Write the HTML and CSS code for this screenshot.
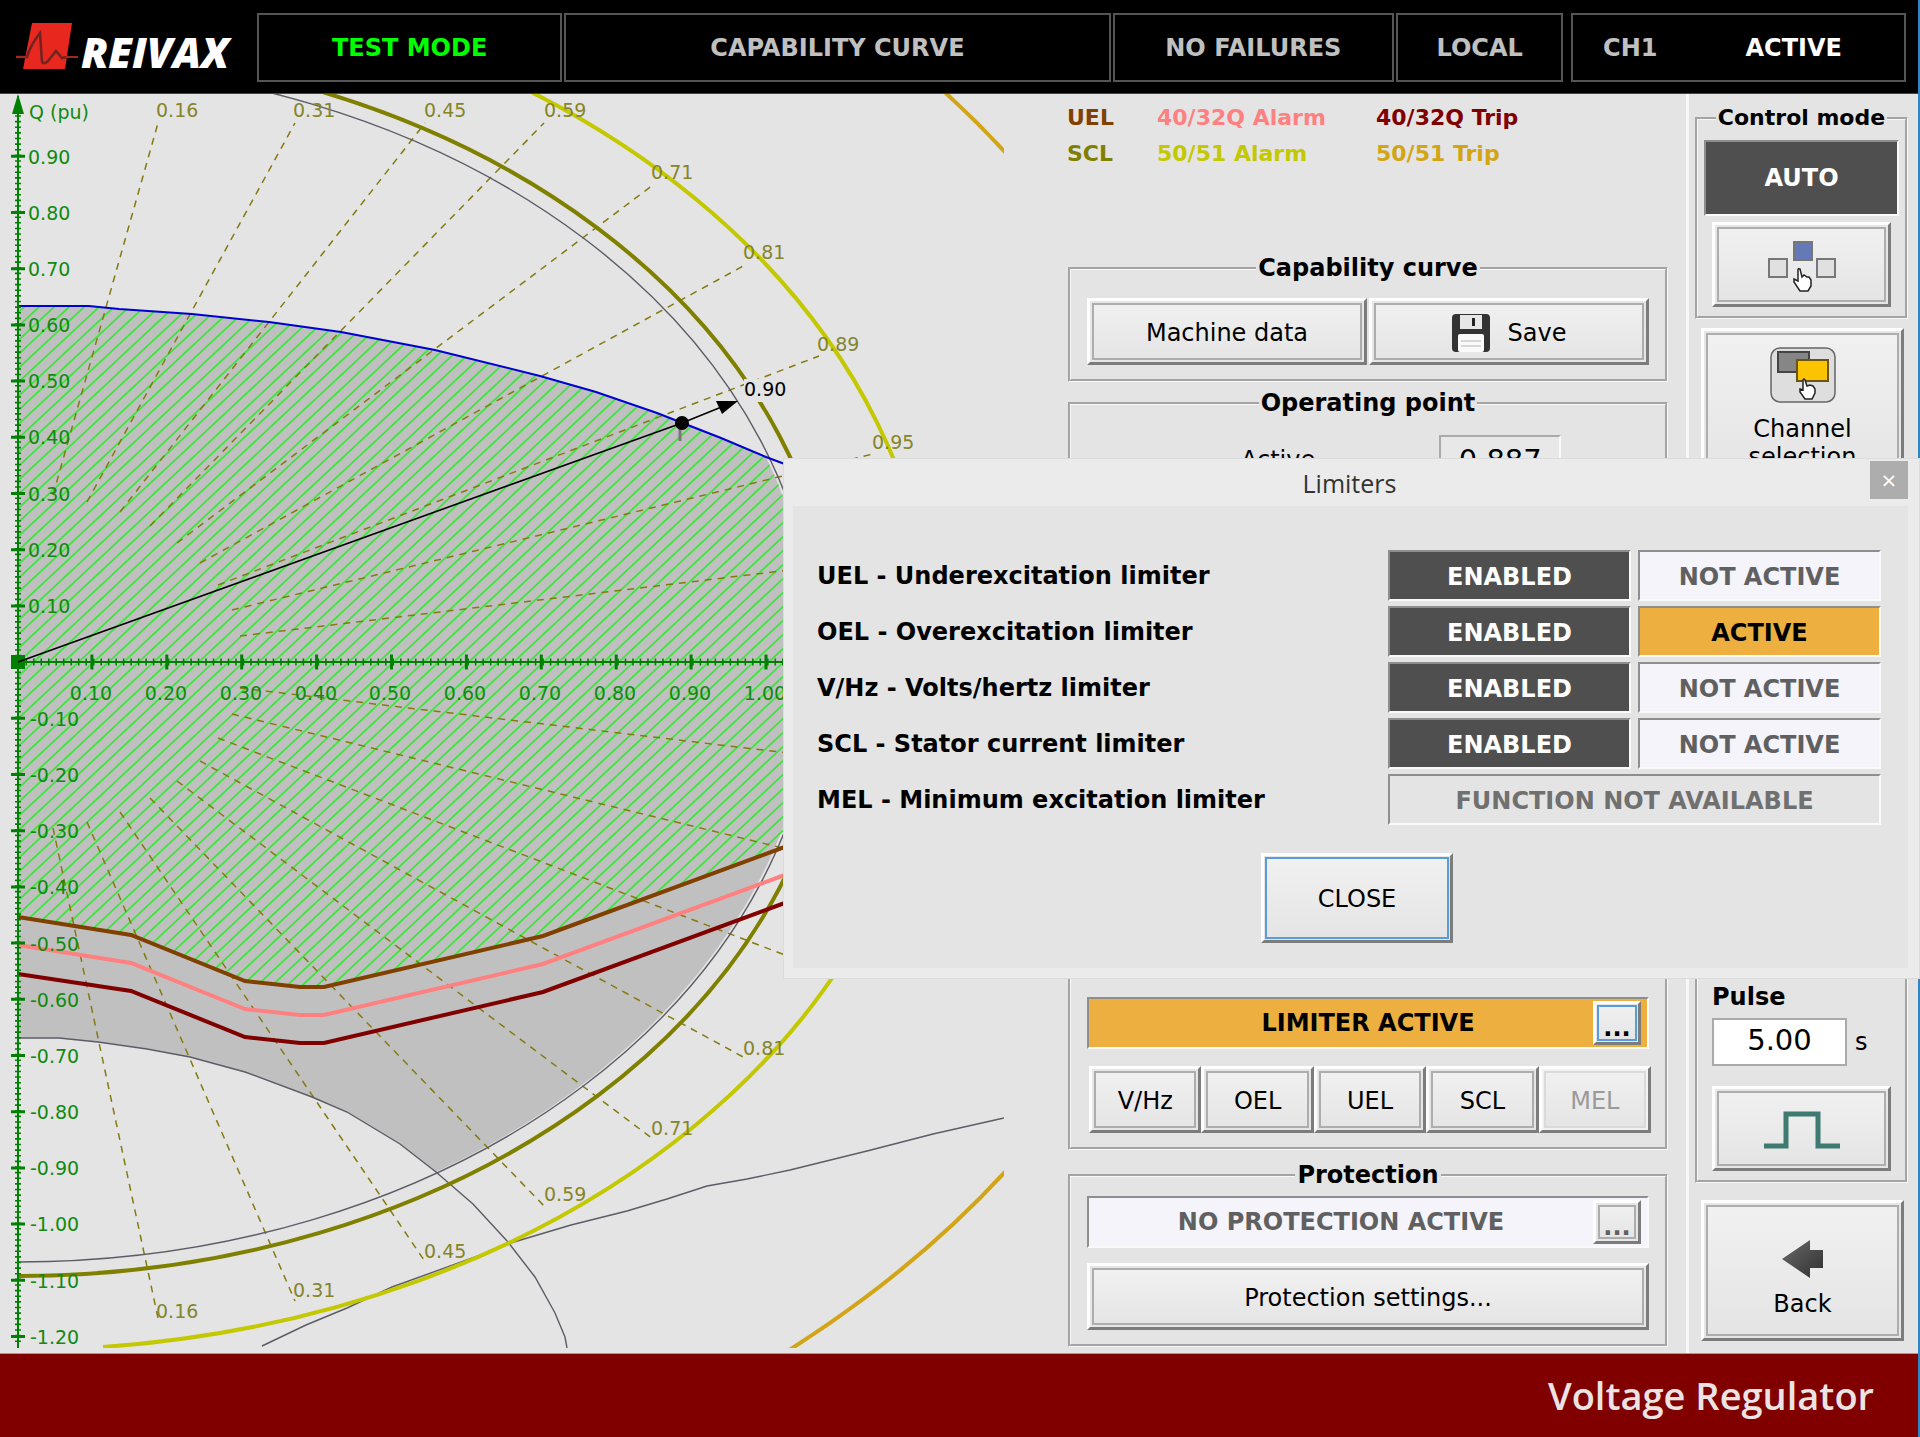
FILE: index.html
```html
<!DOCTYPE html>
<html lang="en">
<head>
<meta charset="utf-8">
<title>Voltage Regulator - Capability curve</title>
<link rel="stylesheet" href="styles.css">
</head>
<body>
<div class="app">
  <header class="topbar">
    <svg class="logo" viewBox="0 0 240 94" role="img" aria-label="REIVAX">
      <path d="M32 23H72L65 69H23Z" fill="#e8281e"/>
      <path d="M16 57H27Q31 44 40 33L42 62Q44 65 48 61L56 51L62 58L66 57" fill="none" stroke="#6e2420" stroke-width="2.5"/>
      <path d="M16 57H26M66 57H78" stroke="#a02820" stroke-width="2"/>
      <text x="81" y="68" class="logo-text">REIVAX</text>
    </svg>
    <div class="cell cell-mode">TEST MODE</div>
    <div class="cell cell-title">CAPABILITY CURVE</div>
    <div class="cell cell-fail">NO FAILURES</div>
    <div class="cell cell-place">LOCAL</div>
    <div class="cell cell-channel"><span>CH1</span><span class="on">ACTIVE</span></div>
  </header>

  <main class="main">
    <svg class="chart" viewBox="0 94 1064 1259" preserveAspectRatio="xMinYMin meet">
      <defs>
        <clipPath id="plot"><rect x="0" y="94" width="1004" height="1254"/></clipPath>
        <pattern id="hatch" x="8" y="0" width="15" height="14" patternUnits="userSpaceOnUse">
          <path d="M-3 16.8L18 -2.8M-3 2.8L3 -2.8M12 16.8L18 11.2" stroke="#3fe43f" stroke-width="1.8"/>
        </pattern>
      </defs>
      <g clip-path="url(#plot)">
        <path fill="#c0c0c0" d="M18 306L89 306L119 309L192 314L269 322L341 332L435 350L540 376L596 392L657 413L721 438L766 457A799 600 0 0 1 436 1172L400 1144L347 1112L312 1097L245 1072L190 1057L147 1049L98 1042L59 1038H18Z"/>
        <path fill="url(#hatch)" d="M18 306L89 306L119 309L192 314L269 322L341 332L435 350L540 376L596 392L657 413L721 438L766 457A799 600 0 0 1 775 852L543 936L315 988L245 981L131 935L18 917Z"/>
        <g class="ray">
          <path d="M53 495L158 123M87 502L295 123M120 512L425 123M150 526L544 123M177 543L653 185M200 563L745 265M218 585L819 356M232 610L873 454M240 636L906 556"/>
          <path d="M53 828L158 1318M87 822L295 1301M120 812L426 1263M150 798L546 1208M177 781L653 1139M200 761L745 1058M218 738L819 968M232 714L873 870M240 688L906 767"/>
        </g>
        <g class="thin">
          <ellipse cx="18" cy="662" rx="799" ry="600"/>
          <path d="M18 1038L59 1038L98 1042L147 1049L190 1057L245 1072L312 1097L347 1112L400 1144L436 1172L473 1204L508 1242L535 1277L555 1313L565 1337L567 1348"/>
          <path d="M262 1346L306 1325L347 1308L392 1287L486 1253L514 1242L571 1225L627 1211L667 1199L707 1186L747 1179L790 1170L867 1151L933 1134L1004 1118"/>
        </g>
        <path class="blue" d="M18 306L89 306L119 309L192 314L269 322L341 332L435 350L540 376L596 392L657 413L721 438L766 457L790 466"/>
        <g class="thick">
          <ellipse cx="18" cy="662" rx="819" ry="614" stroke="#808000"/>
          <path d="M103 1347A917 688 0 0 0 103 -23" stroke="#c3c800"/>
          <ellipse cx="18" cy="662" rx="1198" ry="899" stroke="#d2a516"/>
          <path stroke="#804000" d="M18 917L131 935L245 981L300 987L324 987L543 936L790 845"/>
          <path stroke="#ff8080" d="M18 945L131 963L245 1009L300 1015L324 1015L543 964L790 873"/>
          <path stroke="#800000" d="M18 974L131 991L245 1037L300 1043L324 1043L543 992L790 901"/>
        </g>
      </g>
      <rect x="0" y="94" width="17" height="1254" fill="#e4e4e4"/>
      <g stroke="#008000" fill="#008000">
        <path d="M18 96V1348M18 662H800" stroke-width="2"/>
        <path d="M18 1342V110" stroke-width="6" stroke-dasharray="1.6 4.02"/>
        <path d="M18 662H800" stroke-width="7" stroke-dasharray="1.6 5.89"/>
        <path d="M18 1338V110" stroke-width="14" stroke-dasharray="3 53.2"/>
        <path d="M90.4 662H800" stroke-width="15" stroke-dasharray="3 71.9"/>
        <path d="M18 94L24 114H12Z" stroke="none"/>
        <rect x="11" y="655" width="14" height="14" stroke="none"/>
      </g>
      <g class="axis">
        <text x="29" y="119">Q (pu)</text>
        <text x="28" y="164">0.90</text><text x="28" y="220">0.80</text><text x="28" y="276">0.70</text>
        <text x="28" y="332">0.60</text><text x="28" y="388">0.50</text><text x="28" y="444">0.40</text>
        <text x="28" y="501">0.30</text><text x="28" y="557">0.20</text><text x="28" y="613">0.10</text>
        <text x="30" y="726">-0.10</text><text x="30" y="782">-0.20</text><text x="30" y="838">-0.30</text>
        <text x="30" y="894">-0.40</text><text x="30" y="951">-0.50</text><text x="30" y="1007">-0.60</text>
        <text x="30" y="1063">-0.70</text><text x="30" y="1119">-0.80</text><text x="30" y="1175">-0.90</text>
        <text x="30" y="1231">-1.00</text><text x="30" y="1288">-1.10</text><text x="30" y="1344">-1.20</text>
        <g text-anchor="middle">
          <text x="91" y="700">0.10</text><text x="166" y="700">0.20</text><text x="241" y="700">0.30</text>
          <text x="316" y="700">0.40</text><text x="390" y="700">0.50</text><text x="465" y="700">0.60</text>
          <text x="540" y="700">0.70</text><text x="615" y="700">0.80</text><text x="690" y="700">0.90</text>
          <text x="765" y="700">1.00</text>
        </g>
      </g>
      <g class="pf">
        <text x="156" y="117">0.16</text><text x="293" y="117">0.31</text><text x="424" y="117">0.45</text>
        <text x="544" y="117">0.59</text><text x="651" y="179">0.71</text><text x="743" y="259">0.81</text>
        <text x="817" y="351">0.89</text><text x="872" y="449">0.95</text>
        <text x="156" y="1318">0.16</text><text x="293" y="1297">0.31</text><text x="424" y="1258">0.45</text>
        <text x="544" y="1201">0.59</text><text x="651" y="1135">0.71</text><text x="743" y="1055">0.81</text>
      </g>
      <path d="M680 425V441" stroke="#777" stroke-width="3"/>
      <path d="M18 662L682 423L724 406" fill="none" stroke="#000" stroke-width="1.6"/>
      <path d="M716 401H738L722 414Z"/>
      <circle cx="682" cy="423" r="7"/>
      <rect x="744" y="379" width="44" height="23" fill="#e4e4e4"/>
      <text x="744" y="396" class="point">0.90</text>
    </svg>

    <section class="panel">
      <div class="key">
        <span class="uel">UEL</span><span class="alarm-q">40/32Q Alarm</span><span class="trip-q">40/32Q Trip</span>
        <span class="scl">SCL</span><span class="alarm-i">50/51 Alarm</span><span class="trip-i">50/51 Trip</span>
      </div>
      <fieldset class="group group-curve">
        <legend>Capability curve</legend>
        <div class="pair">
          <button type="button" class="btn">Machine data</button>
          <button type="button" class="btn">
            <svg width="38" height="38" viewBox="0 0 38 38" aria-hidden="true">
              <rect x="0" y="0" width="38" height="38" rx="4" fill="#333"/>
              <rect x="8" y="1" width="22" height="14" fill="#e6e6e6"/>
              <rect x="20" y="4" width="3" height="8" fill="#222"/>
              <rect x="6" y="20" width="26" height="18" rx="2" fill="#fafafa"/>
              <path d="M9 27H29M9 32H29" stroke="#ccc" stroke-width="1.5"/>
            </svg>
            <span>Save</span>
          </button>
        </div>
      </fieldset>
      <fieldset class="group group-point">
        <legend>Operating point</legend>
        <div class="reading"><label for="active">Active</label><input id="active" value="0.887" readonly></div>
      </fieldset>
      <fieldset class="group group-limiters">
        <legend>Limiters</legend>
        <div class="status warn"><span>LIMITER ACTIVE</span><button type="button" class="btn more focus">...</button></div>
        <div class="row">
          <button type="button" class="btn">V/Hz</button>
          <button type="button" class="btn">OEL</button>
          <button type="button" class="btn">UEL</button>
          <button type="button" class="btn">SCL</button>
          <button type="button" class="btn" disabled>MEL</button>
        </div>
      </fieldset>
      <fieldset class="group group-protection">
        <legend>Protection</legend>
        <div class="status idle"><span>NO PROTECTION ACTIVE</span><button type="button" class="btn more">...</button></div>
        <button type="button" class="btn wide">Protection settings...</button>
      </fieldset>
    </section>

    <aside class="side">
      <fieldset class="group group-control">
        <legend>Control mode</legend>
        <div class="state dark">AUTO</div>
        <button type="button" class="btn side-btn" aria-label="Select control mode">
          <svg width="70" height="52" viewBox="0 0 70 52" aria-hidden="true">
            <g stroke="#777" stroke-width="2">
              <rect x="2" y="19" width="18" height="18" fill="#e0e0e0"/>
              <rect x="27" y="2" width="18" height="18" fill="#6379b8"/>
              <rect x="50" y="19" width="18" height="18" fill="#e0e0e0"/>
            </g>
            <path d="M31 30Q31 28 33 29L35 37L37 35L40 37L42 37L44 40V46L41 51H33L27 42V39L31 41Z" fill="#fff" stroke="#222" stroke-width="1.5"/>
          </svg>
        </button>
      </fieldset>
      <button type="button" class="btn stack channel">
        <svg width="66" height="56" viewBox="0 0 66 56" aria-hidden="true">
          <rect x="1" y="1" width="64" height="54" rx="9" fill="#dedede" stroke="#666" stroke-width="1.5"/>
          <rect x="8" y="5" width="31" height="20" fill="#868686" stroke="#444" stroke-width="2"/>
          <rect x="27" y="13" width="31" height="21" fill="#fcc400" stroke="#6a5510" stroke-width="2"/>
          <path d="M33 33Q34 31 35 33L37 39L40 38L43 39L45 42V46L42 52H35L30 45V42L33 43Z" fill="#fff" stroke="#222" stroke-width="1.5"/>
        </svg>
        <span>Channel selection</span>
      </button>
      <fieldset class="group group-pulse">
        <label class="pulse-label" for="pulse">Pulse</label>
        <div class="pulse-row"><input id="pulse" value="5.00"><span>s</span></div>
        <button type="button" class="btn side-btn" aria-label="Send pulse">
          <svg width="76" height="40" viewBox="0 0 76 40" aria-hidden="true">
            <path d="M0 36H22V4H54V36H76" fill="none" stroke="#3f7a70" stroke-width="5"/>
          </svg>
        </button>
      </fieldset>
      <button type="button" class="btn stack back">
        <svg width="42" height="38" viewBox="0 0 42 38" aria-hidden="true">
          <defs><linearGradient id="ink" x1="0" y1="0" x2="1" y2="1"><stop offset="0" stop-color="#6a6a6a"/><stop offset="1" stop-color="#303030"/></linearGradient></defs>
          <path d="M0 19L28 0V10H41V28H28V38Z" fill="url(#ink)"/>
        </svg>
        <span>Back</span>
      </button>
    </aside>
  </main>

  <footer class="footer">Voltage Regulator</footer>

  <section class="dialog" role="dialog" aria-labelledby="dialog-title">
    <div class="dialog-bar">
      <h2 id="dialog-title">Limiters</h2>
      <button type="button" class="x" aria-label="Close window">×</button>
    </div>
    <div class="dialog-body">
      <table class="limits">
        <tr><th scope="row">UEL - Underexcitation limiter</th><td class="dark">ENABLED</td><td class="idle">NOT ACTIVE</td></tr>
        <tr><th scope="row">OEL - Overexcitation limiter</th><td class="dark">ENABLED</td><td class="warn">ACTIVE</td></tr>
        <tr><th scope="row">V/Hz - Volts/hertz limiter</th><td class="dark">ENABLED</td><td class="idle">NOT ACTIVE</td></tr>
        <tr><th scope="row">SCL - Stator current limiter</th><td class="dark">ENABLED</td><td class="idle">NOT ACTIVE</td></tr>
        <tr><th scope="row">MEL - Minimum excitation limiter</th><td class="none" colspan="2">FUNCTION NOT AVAILABLE</td></tr>
      </table>
      <button type="button" class="btn focus close">CLOSE</button>
    </div>
  </section>
</div>
</body>
</html>
```
FILE: styles.css
```css
* { box-sizing: border-box; }
body {
  margin: 0;
  background: #e4e4e4;
  color: #000;
  font: 24px/28px "DejaVu Sans", Verdana, sans-serif;
}
.app {
  position: relative;
  display: flex;
  flex-direction: column;
  min-height: 100vh;
  border-right: 2px solid #2f86c4;
}
button, input { font: inherit; color: inherit; }

/* top bar */
.topbar {
  display: flex;
  gap: 2px;
  height: 94px;
  padding: 13px 12px 11px 0;
  background: #000;
  border-bottom: 1px solid #444;
  font-weight: bold;
  color: #c0c0c0;
}
.logo { flex: none; width: 240px; height: 94px; margin: -13px 15px 0 0; }
.logo-text { font: italic 800 42px "Open Sans", sans-serif; fill: #fff; }
.cell {
  display: flex;
  align-items: center;
  justify-content: center;
  border: 2px solid #555;
  white-space: nowrap;
}
.cell-mode { flex: 305 1 0; color: #00ff00; }
.cell-title { flex: 549 1 0; }
.cell-fail { flex: 281 1 0; }
.cell-place { flex: 165 1 0; margin-right: 6px; }
.cell-channel { flex: 335 1 0; gap: 88px; }
.on { margin-right: 32px; color: #fff; }

/* main area */
.main {
  flex: 1;
  display: grid;
  grid-template-columns: minmax(0, 1fr) 622px 232px;
}
.chart { display: block; width: 100%; }
.ray { fill: none; stroke: #857a10; stroke-width: 1.5; stroke-dasharray: 7 6; }
.thin { fill: none; stroke: #5c5c66; stroke-width: 1.4; }
.thick { fill: none; stroke-width: 4; }
.blue { fill: none; stroke: #0000d0; stroke-width: 2; }
.axis, .pf, .point { font-size: 19px; }
.axis { fill: #108a10; }
.pf { fill: #85852a; }

.panel {
  display: flex;
  flex-direction: column;
  gap: 7px;
  padding: 6px 18px 6px 4px;
}
.key {
  display: grid;
  grid-template-columns: 90px 219px auto;
  margin: 0 0 75px -1px;
  font-size: 22px;
  line-height: 36px;
  font-weight: bold;
}
.uel { color: #804000; }
.alarm-q { color: #ff8080; }
.trip-q { color: #800000; }
.scl { color: #808000; }
.alarm-i { color: #c3c800; }
.trip-i { color: #d2a516; }

.group {
  min-width: 0;
  margin: 0;
  padding: 16px 16px 14px;
  border: 3px groove #f8f8f8;
}
.group legend {
  margin: 0 auto;
  padding: 0 2px;
  font-weight: bold;
}
.btn {
  display: flex;
  align-items: center;
  justify-content: center;
  gap: 18px;
  height: 67px;
  margin: 0;
  padding: 2px 0 0;
  border: 3px solid;
  border-color: #fdfdfd #7c7c7c #7c7c7c #fdfdfd;
  border-radius: 0;
  background: linear-gradient(#f1f1f1, #e4e4e4);
  box-shadow: inset 0 0 0 2px #e6e6e6, inset 0 0 0 4px #adadad;
}
.btn:disabled { color: #9a9a9a; box-shadow: inset 0 0 0 2px #f2f2f2, inset 0 0 0 4px #dadada; }
.btn.focus { box-shadow: inset 0 0 0 1px #e6e6e6, inset 0 0 0 3px #5a9be0; }
.pair, .row { display: flex; }
.pair { gap: 2px; }
.row { margin: 0 -2px 0 2px; }
.pair .btn, .row .btn { flex: 1 1 0; }
.group-point { flex: 1; padding-top: 18px; }
.reading { display: flex; gap: 124px; padding-left: 154px; align-items: center; }
.reading input {
  width: 122px;
  height: 50px;
  padding: 0;
  border: 2px solid;
  border-color: #aaa #fafafa #fafafa #aaa;
  background: #e8e8e8;
  font-size: 29px;
  text-align: center;
}
.group-limiters { padding-top: 30px; }
.group-protection { margin-top: 4px; padding-top: 7px; }
.status {
  display: grid;
  grid-template-columns: 1fr 48px;
  align-items: center;
  height: 52px;
  padding-right: 6px;
  margin-bottom: 15px;
  font-weight: bold;
  text-align: center;
}
.group-limiters .status { padding-left: 54px; margin-bottom: 17px; }
.btn.more { height: 44px; padding-top: 10px; }
.wide { width: 100%; }
.status, .state, .limits td {
  border: 2px solid;
  border-color: #8e8e8e #fafafa #fafafa #8e8e8e;
}
.dark { background: #4f4f4f; color: #fff; }
.warn { background: #edaf3f; }
.idle { background: #f4f4fa; color: #606060; }
.none { color: #707070; }

/* right-hand column */
.side {
  display: flex;
  flex-direction: column;
  padding: 10px 10px 12px 6px;
  border-left: 3px solid #f8f8f8;
}
.side .group { padding: 8px 6px 9px; }
.side legend { font-size: 22px; }
.state {
  display: flex;
  align-items: center;
  justify-content: center;
  height: 76px;
  margin-bottom: 6px;
  font-weight: bold;
}
.side-btn { width: calc(100% - 16px); height: 85px; margin: 0 8px; }
.stack { flex-direction: column; margin: 0 4px 0 6px; gap: 12px; }
.channel { height: 160px; margin-top: 9px; }
.side .group-pulse { margin-top: auto; padding-top: 40px; }
.pulse-label { display: block; margin: 0 8px 7px; font-weight: bold; }
.pulse-row { display: flex; align-items: center; gap: 8px; margin: 0 8px 20px; }
.pulse-row input {
  width: 135px;
  height: 48px;
  padding: 0 0 4px;
  border: 2px solid #aaa;
  background: #fff;
  font-size: 29px;
  text-align: center;
}
.back { height: 141px; margin-top: 17px; padding-top: 16px; }

.footer {
  height: 84px;
  padding: 0 44px;
  background: #800000;
  border-top: 1px solid #c09080;
  color: #ece4e4;
  font: 600 38px/82px "Open Sans", sans-serif;
  text-align: right;
}

/* dialog over the page */
.dialog {
  position: absolute;
  top: 458px;
  right: -2px;
  width: 1137px;
  padding: 0 11px 10px 9px;
  background: #ebebeb;
  border: 1px solid #dcdcdc;
}
.dialog-bar {
  display: grid;
  grid-template-columns: 1fr 38px;
  align-items: center;
  height: 47px;
}
.dialog-bar h2 {
  margin: 0 0 0 36px;
  font: 25px/32px "Open Sans", sans-serif;
  color: #333;
  text-align: center;
}
.x {
  height: 38px;
  margin-top: -5px;
  padding: 0;
  border: 0;
  background: #adadad;
  color: #fff;
  font-size: 20px;
}
.dialog-body { padding: 39px 20px 25px 17px; background: #e4e4e4; }
.limits {
  width: 100%;
  table-layout: fixed;
  border-collapse: separate;
  border-spacing: 7px 5px;
  font-weight: bold;
}
.limits th { padding: 0; text-align: left; }
.limits td { width: 243px; height: 51px; padding: 2px 0 0; text-align: center; }
.close { width: 192px; height: 90px; margin: 23px auto 0 451px; }
```
